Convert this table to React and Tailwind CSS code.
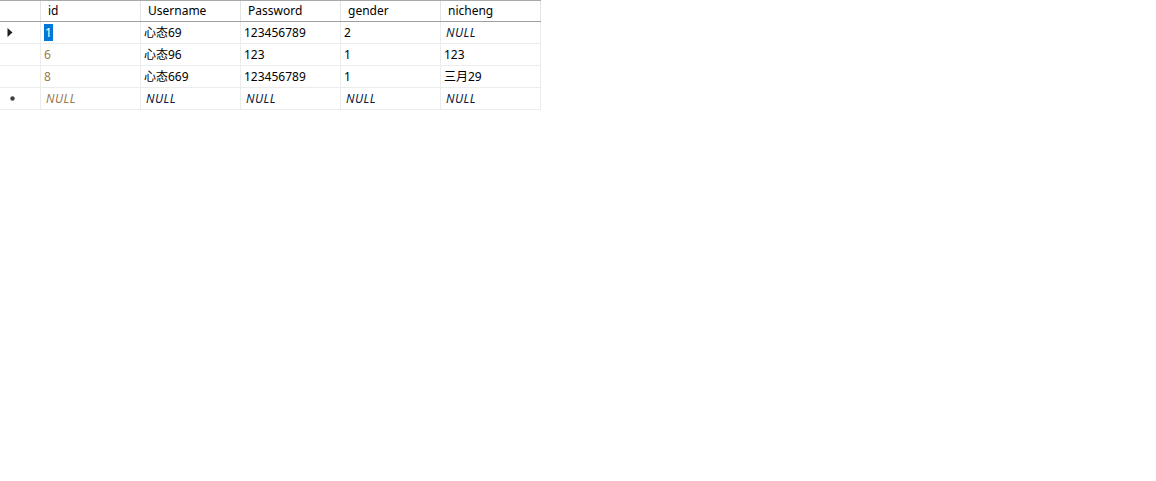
const COLS = ['id', 'Username', 'Password', 'gender', 'nicheng'];

const ROWS = [
  { id: '1', cells: ['心态69', '123456789', '2', null], current: true },
  { id: '6', cells: ['心态96', '123', '1', '123'] },
  { id: '8', cells: ['心态669', '123456789', '1', '三月29'] },
];

const font = { fontFamily: '"Noto Sans", "Noto Sans CJK SC", sans-serif' };

function Null({ brown }) {
  return (
    <span className={`italic ml-[2px] tracking-[0.5px] ${brown ? 'text-[#9a7a50]' : 'text-[#0a1a40]'}`}>
      NULL
    </span>
  );
}

function Cell({ children, className = '' }) {
  return (
    <div className={`w-[100px] h-full flex items-center pl-[3px] border-r border-[#ececec] truncate ${className}`}>
      {children}
    </div>
  );
}

export default function App() {
  return (
    <div className="w-[1156px] h-[481px] bg-white text-[12px] text-black" style={font}>
      <div className="w-[541px] border-t border-[#a9a9a9]">
        <div className="flex h-[21px] border-b border-[#a0a0a0]">
          <div className="w-[41px] h-full border-r border-[#e3e3e3]" />
          {COLS.map((c) => (
            <div key={c} className="w-[100px] h-full flex items-center pl-[7px] border-r border-[#e3e3e3]">
              {c}
            </div>
          ))}
        </div>

        {ROWS.map((r) => (
          <div key={r.id} className="flex h-[22px] border-b border-[#ececec]">
            <div className="w-[41px] h-full flex items-center pl-[7px] border-r border-[#ececec]">
              {r.current && (
                <svg width="6" height="9" viewBox="0 0 6 9">
                  <path d="M0.5 0 L5.5 4.5 L0.5 9 Z" fill="#202020" />
                </svg>
              )}
            </div>
            <Cell className="text-[#9a7a50]">
              {r.current ? (
                <span className="bg-[#0078d7] text-white px-[1px] leading-[17px]">{r.id}</span>
              ) : (
                r.id
              )}
            </Cell>
            {r.cells.map((v, i) => (
              <Cell key={i}>{v === null ? <Null /> : v}</Cell>
            ))}
          </div>
        ))}

        <div className="flex h-[22px] border-b border-[#ececec]">
          <div className="w-[41px] h-full flex items-center pl-[10px] border-r border-[#ececec]">
            <svg width="5" height="5" viewBox="0 0 5 5">
              <circle cx="2.5" cy="2.5" r="2.2" fill="#404040" />
            </svg>
          </div>
          <Cell><Null brown /></Cell>
          {[0, 1, 2, 3].map((i) => (
            <Cell key={i}><Null /></Cell>
          ))}
        </div>
      </div>
    </div>
  );
}
